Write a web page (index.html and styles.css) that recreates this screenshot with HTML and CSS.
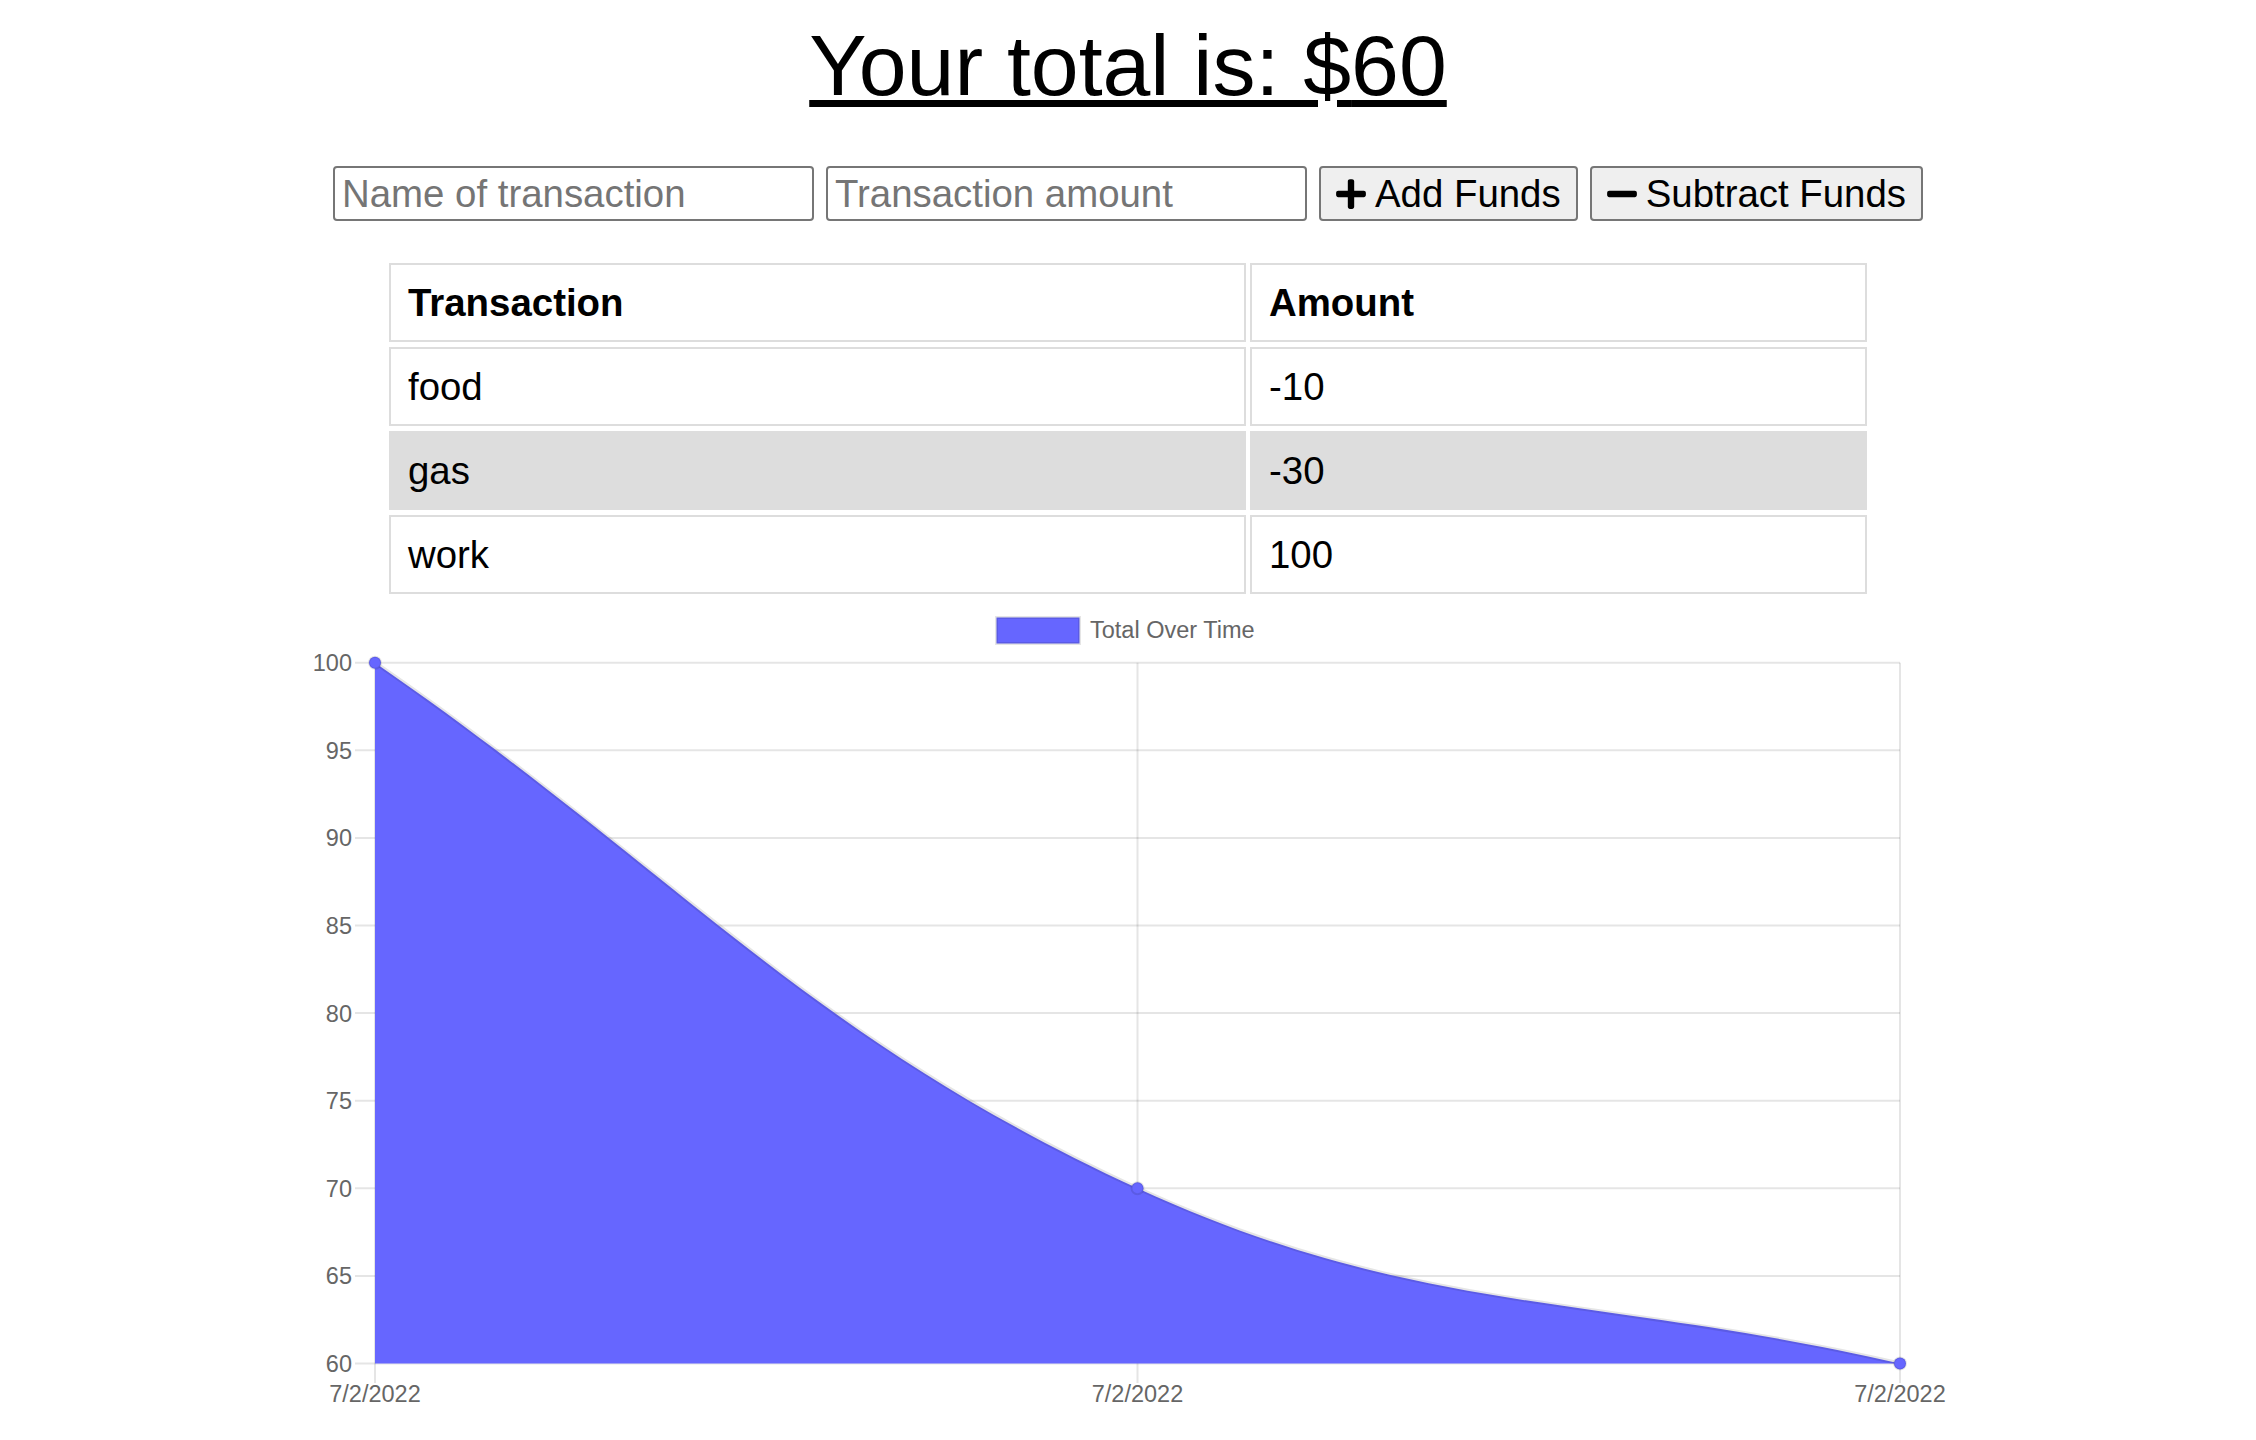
FILE: index.html
```html
<!DOCTYPE html>
<html lang="en">
<head>
    <meta charset="UTF-8">
    <meta name="viewport" content="width=device-width, initial-scale=1.0">
    <title>Budget Tracker</title>
    <link rel="stylesheet" href="styles.css">
</head>
<body>
    <h1 class="total">Your total is: $<span id="total">60</span></h1>

    <div class="form">
        <input type="text" id="t-name" placeholder="Name of transaction">
        <input type="number" id="t-amount" placeholder="Transaction amount">
        <button id="add-btn">
            <svg class="icon" viewBox="0 0 448 512"><path d="M416 208H272V64c0-17.67-14.33-32-32-32h-32c-17.67 0-32 14.33-32 32v144H32c-17.67 0-32 14.33-32 32v32c0 17.67 14.33 32 32 32h144v144c0 17.67 14.330 32 32 32h32c17.67 0 32-14.33 32-32V304h144c17.67 0 32-14.33 32-32v-32c0-17.67-14.33-32-32-32z"/></svg>
            Add Funds
        </button>
        <button id="sub-btn">
            <svg class="icon" viewBox="0 0 448 512"><path d="M416 208H32c-17.67 0-32 14.33-32 32v32c0 17.67 14.33 32 32 32h384c17.67 0 32-14.33 32-32v-32c0-17.67-14.33-32-32-32z"/></svg>
            Subtract Funds
        </button>
    </div>

    <table>
        <thead>
            <tr>
                <th class="col-name">Transaction</th>
                <th>Amount</th>
            </tr>
        </thead>
        <tbody id="tbody">
            <tr><td>food</td><td>-10</td></tr>
            <tr><td>gas</td><td>-30</td></tr>
            <tr><td>work</td><td>100</td></tr>
        </tbody>
    </table>

    <!-- chart: viewBox uses page coordinates of the canvas area -->
    <svg class="chart" viewBox="308 599 1640 830" width="1640" height="830">
        <g class="legend">
            <rect x="996.5" y="617.5" width="83" height="26" fill="#6666ff" stroke="rgba(0,0,0,0.1)" stroke-width="3"/>
            <text x="1090" y="638">Total Over Time</text>
        </g>

        <g class="grid" stroke="rgba(0,0,0,0.1)" stroke-width="2">
            <line x1="355" y1="662.7" x2="1900" y2="662.7"/>
            <line x1="355" y1="750.3" x2="1900" y2="750.3"/>
            <line x1="355" y1="837.9" x2="1900" y2="837.9"/>
            <line x1="355" y1="925.5" x2="1900" y2="925.5"/>
            <line x1="355" y1="1013.1" x2="1900" y2="1013.1"/>
            <line x1="355" y1="1100.7" x2="1900" y2="1100.7"/>
            <line x1="355" y1="1188.3" x2="1900" y2="1188.3"/>
            <line x1="355" y1="1275.9" x2="1900" y2="1275.9"/>
            <line x1="355" y1="1363.5" x2="1900" y2="1363.5"/>
            <line x1="375" y1="662.7" x2="375" y2="1383"/>
            <line x1="1137.5" y1="662.7" x2="1137.5" y2="1383"/>
            <line x1="1900" y1="662.7" x2="1900" y2="1383"/>
        </g>

        <g class="ticks y-ticks">
            <text x="352" y="671.1">100</text>
            <text x="352" y="758.7">95</text>
            <text x="352" y="846.3">90</text>
            <text x="352" y="933.9">85</text>
            <text x="352" y="1021.5">80</text>
            <text x="352" y="1109.1">75</text>
            <text x="352" y="1196.7">70</text>
            <text x="352" y="1284.3">65</text>
            <text x="352" y="1371.9">60</text>
        </g>
        <g class="ticks x-ticks">
            <text x="375" y="1402">7/2/2022</text>
            <text x="1137.5" y="1402">7/2/2022</text>
            <text x="1900" y="1402">7/2/2022</text>
        </g>

        <path class="area" d="M375,662.7 C680,872.9 806.9,1036.4 1137.5,1188.3 C1416.9,1316.7 1595,1293.3 1900,1363.5 L375,1363.5 Z"/>
        <path class="line" d="M375,662.7 C680,872.9 806.9,1036.4 1137.5,1188.3 C1416.9,1316.7 1595,1293.3 1900,1363.5"/>

        <g class="points">
            <circle cx="375" cy="662.7" r="6"/>
            <circle cx="1137.5" cy="1188.3" r="6"/>
            <circle cx="1900" cy="1363.5" r="6"/>
        </g>
    </svg>
</body>
</html>
```

FILE: styles.css
```css
body {
    margin: 0;
    font-family: "Liberation Sans", Arial, sans-serif;
    color: #000;
    background: #fff;
}
.total {
    margin: 15px 0 0;
    font-size: 86px;
    line-height: 100px;
    font-weight: normal;
    text-align: center;
    text-decoration: underline;
    text-decoration-thickness: 7px;
    text-underline-offset: 5px;
}
.form {
    display: flex;
    justify-content: center;
    gap: 12px;
    margin-top: 51px;
}
.form input {
    width: 481px;
    height: 55px;
    box-sizing: border-box;
    border: 2px solid #767676;
    border-radius: 4px;
    padding: 0 7px;
    font-family: inherit;
    font-size: 38.4px;
    color: #000;
    background: #fff;
}
.form input::placeholder {
    color: #757575;
}
.form button {
    display: inline-flex;
    align-items: center;
    gap: 9px;
    height: 55px;
    box-sizing: border-box;
    padding: 0 15px;
    border: 2px solid #767676;
    border-radius: 4px;
    background-color: #efefef;
    font-family: inherit;
    font-size: 38.4px;
    color: #000;
    cursor: pointer;
}
.icon {
    width: 30px;
    height: 34px;
    fill: #000;
}
table {
    margin: 37px auto 0;
    width: 1486px;
    table-layout: fixed;
    border-collapse: separate;
    border-spacing: 4px 5px;
    font-size: 38.4px;
}
th, td {
    border: 2px solid #ddd;
    padding: 16px 17px;
    line-height: 43px;
    text-align: left;
}
th.col-name {
    width: 819px;
}
tbody tr:nth-child(even) td {
    background-color: #ddd;
}
.chart {
    display: block;
    margin: 0 auto;
}
.chart text {
    font-family: "Liberation Sans", Arial, sans-serif;
    font-size: 23.5px;
    fill: #666;
}
.y-ticks text {
    text-anchor: end;
}
.x-ticks text {
    text-anchor: middle;
}
.area {
    fill: #6666ff;
}
.line {
    fill: none;
    stroke: rgba(0, 0, 0, 0.1);
    stroke-width: 4;
}
.points circle {
    fill: #6666ff;
    stroke: rgba(0, 0, 0, 0.1);
    stroke-width: 2;
}
```
